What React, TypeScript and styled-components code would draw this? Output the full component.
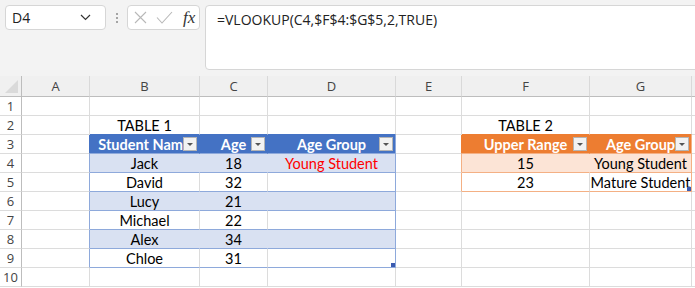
import styled, { createGlobalStyle } from 'styled-components'

const GlobalStyle = createGlobalStyle`
  html, body {
    margin: 0;
    padding: 0;
    background: #ffffff;
  }
  body {
    width: 695px;
    height: 288px;
    overflow: hidden;
    font-family: "Open Sans", "Noto Sans", sans-serif;
  }
`

const COLS = [22, 68, 110, 68, 128, 66, 128, 102, 10]
const LETTERS = ['', 'A', 'B', 'C', 'D', 'E', 'F', 'G', '']
const GRID = '#dcdcdc'
const BLUE = '#4472c4'
const BLUE_LINE = '#8ea9db'
const BLUE_BAND = '#d9e1f2'
const ORANGE = '#ed7d31'
const ORANGE_LINE = '#f4b084'
const ORANGE_BAND = '#fce4d6'

const Toolbar = styled.div`
  height: 76px;
  background: #f3f3f3;
  display: flex;
  align-items: flex-start;
  padding: 5px 0 0 5px;
  box-sizing: border-box;
  overflow: hidden;
  & > * {
    flex-shrink: 0;
  }
`

const NameBox = styled.div`
  width: 101px;
  height: 25px;
  box-sizing: border-box;
  background: #fff;
  border: 1px solid #d6d6d6;
  border-radius: 4px;
  display: flex;
  align-items: center;
  justify-content: space-between;
  padding: 0 14px 0 6px;
  font-size: 14px;
  color: #222;
`

const Dots = styled.div`
  width: 21px;
  height: 25px;
  display: flex;
  flex-direction: column;
  align-items: center;
  justify-content: center;
  gap: 2px;
  span {
    width: 2px;
    height: 2px;
    background: #8a8a8a;
    border-radius: 1px;
  }
`

const FxBox = styled.div`
  width: 73px;
  height: 25px;
  box-sizing: border-box;
  background: #fff;
  border: 1px solid #d6d6d6;
  border-radius: 4px;
  display: flex;
  align-items: center;
  padding: 0 0 0 6px;
  gap: 9px;
`

const Fx = styled.span`
  font-family: "Liberation Serif", serif;
  font-style: italic;
  font-size: 17px;
  color: #333;
  margin-left: 1px;
`

const FormulaBox = styled.div`
  margin-left: 5px;
  width: 520px;
  height: 65px;
  box-sizing: border-box;
  background: #fff;
  border: 1px solid #d6d6d6;
  border-radius: 4px;
  padding: 4px 0 0 11px;
  font-size: 14px;
  color: #222;
`

const Row = styled.div`
  display: flex;
  height: 19px;
`

const HeadRow = styled(Row)`
  height: 21px;
  background: #f0f0f0;
`

const ColHead = styled.div<{ $w: number; $corner?: boolean }>`
  width: ${({ $w }) => $w}px;
  flex-shrink: 0;
  box-sizing: border-box;
  border-bottom: 1px solid #bdbdbd;
  border-right: 1px solid ${({ $corner }) => ($corner ? '#bdbdbd' : '#d9d9d9')};
  display: flex;
  align-items: center;
  justify-content: center;
  font-size: 13px;
  color: #444;
  position: relative;
`

const Corner = styled.div`
  position: absolute;
  right: 3px;
  bottom: 3px;
  width: 0;
  height: 0;
  border-left: 13px solid transparent;
  border-bottom: 13px solid #dadada;
`

const RowHead = styled.div`
  width: 22px;
  flex-shrink: 0;
  box-sizing: border-box;
  border-right: 1px solid #bdbdbd;
  border-bottom: 1px solid ${GRID};
  display: flex;
  align-items: center;
  justify-content: center;
  font-size: 13px;
  color: #444;
  background: #fff;
`

const Cell = styled.div<{
  $w: number
  $bg?: string
  $rc?: string
  $bc?: string
  $color?: string
  $bold?: boolean
}>`
  width: ${({ $w }) => $w}px;
  flex-shrink: 0;
  box-sizing: border-box;
  background: ${({ $bg }) => $bg || '#fff'};
  border-right: 1px solid ${({ $rc }) => $rc || GRID};
  border-bottom: 1px solid ${({ $bc }) => $bc || GRID};
  display: flex;
  align-items: center;
  justify-content: center;
  overflow: hidden;
  white-space: nowrap;
  position: relative;
  font-family: Lato, "Open Sans", sans-serif;
  font-size: 14.5px;
  font-weight: ${({ $bold }) => ($bold ? 700 : 400)};
  color: ${({ $color }) => $color || '#000'};
`

const FilterBtn = styled.div`
  position: absolute;
  right: 2px;
  top: 2px;
  width: 14px;
  height: 14px;
  box-sizing: border-box;
  background: #f2f2f2;
  border: 1px solid #b4b4b4;
  display: flex;
  align-items: center;
  justify-content: center;
  &::after {
    content: '';
    border-left: 3px solid transparent;
    border-right: 3px solid transparent;
    border-top: 3px solid #555;
  }
`

const Handle = styled.div`
  position: absolute;
  right: 0;
  bottom: 0;
  width: 4px;
  height: 4px;
  background: #3b5bb0;
`

type CellSpec = {
  text?: string
  bg?: string
  rc?: string
  bc?: string
  color?: string
  bold?: boolean
  filter?: boolean
  handle?: boolean
}

const students = [
  ['Jack', '18', 'Young Student'],
  ['David', '32', ''],
  ['Lucy', '21', ''],
  ['Michael', '22', ''],
  ['Alex', '34', ''],
  ['Chloe', '31', ''],
]

const ranges = [
  ['15', 'Young Student'],
  ['23', 'Mature Student'],
]

function buildRows(): CellSpec[][] {
  const rows: CellSpec[][] = []
  for (let r = 1; r <= 10; r++) {
    const cells: CellSpec[] = COLS.slice(1).map(() => ({}))
    // indexes: 0 A, 1 B, 2 C, 3 D, 4 E, 5 F, 6 G, 7 H
    if (r === 2) {
      cells[1].text = 'TABLE 1'
      cells[5].text = 'TABLE 2'
      ;[1, 2, 3].forEach((i) => (cells[i].bc = BLUE))
      ;[5, 6].forEach((i) => (cells[i].bc = ORANGE))
    }
    if (r === 3) {
      ;['Student Name', 'Age', 'Age Group'].forEach((t, k) => {
        cells[k + 1] = { text: t, bg: BLUE, rc: BLUE, bc: BLUE_LINE, color: '#fff', bold: true, filter: true }
      })
      cells[3].rc = BLUE_LINE
      cells[0].rc = BLUE
      ;['Upper Range', 'Age Group'].forEach((t, k) => {
        cells[k + 5] = { text: t, bg: ORANGE, rc: ORANGE, bc: ORANGE_LINE, color: '#fff', bold: true, filter: true }
      })
      cells[6].rc = ORANGE_LINE
      cells[4].rc = ORANGE
    }
    if (r >= 4 && r <= 9) {
      const d = students[r - 4]
      const band = r % 2 === 0
      cells[0].rc = BLUE_LINE
      d.forEach((t, k) => {
        cells[k + 1] = {
          text: t,
          bg: band ? BLUE_BAND : '#fff',
          rc: k === 2 ? BLUE_LINE : band ? BLUE_BAND : GRID,
          bc: BLUE_LINE,
          color: k === 2 && t ? '#ff0000' : '#000',
        }
      })
      if (r === 9) cells[3].handle = true
    }
    if (r === 4 || r === 5) {
      const d = ranges[r - 4]
      const band = r === 4
      cells[4].rc = ORANGE_LINE
      d.forEach((t, k) => {
        cells[k + 5] = {
          text: t,
          bg: band ? ORANGE_BAND : '#fff',
          rc: k === 1 ? ORANGE_LINE : band ? ORANGE_BAND : GRID,
          bc: ORANGE_LINE,
        }
      })
      if (r === 5) cells[6].handle = true
    }
    rows.push(cells)
  }
  return rows
}

function Chevron() {
  return (
    <svg width="11" height="7" viewBox="0 0 11 7" fill="none">
      <path d="M1 1l4.5 4.5L10 1" stroke="#333" strokeWidth="1.2" />
    </svg>
  )
}

function Cross() {
  return (
    <svg width="13" height="13" viewBox="0 0 13 13" fill="none">
      <path d="M1 1l11 11M12 1L1 12" stroke="#b8b8b8" strokeWidth="1.1" />
    </svg>
  )
}

function Check() {
  return (
    <svg width="17" height="13" viewBox="0 0 17 13" fill="none">
      <path d="M1 6.5l5 5.5L16 1" stroke="#b8b8b8" strokeWidth="1.1" />
    </svg>
  )
}

function App() {
  const rows = buildRows()
  return (
    <>
      <GlobalStyle />
      <Toolbar>
        <NameBox>
          <span>D4</span>
          <Chevron />
        </NameBox>
        <Dots>
          <span />
          <span />
          <span />
        </Dots>
        <FxBox>
          <Cross />
          <Check />
          <Fx>fx</Fx>
        </FxBox>
        <FormulaBox>=VLOOKUP(C4,$F$4:$G$5,2,TRUE)</FormulaBox>
      </Toolbar>
      <HeadRow>
        {COLS.map((w, i) => (
          <ColHead key={i} $w={w} $corner={i === 0}>
            {i === 0 ? <Corner /> : LETTERS[i]}
          </ColHead>
        ))}
      </HeadRow>
      {rows.map((cells, r) => (
        <Row key={r}>
          <RowHead>{r + 1}</RowHead>
          {cells.map((c, i) => (
            <Cell
              key={i}
              $w={COLS[i + 1]}
              $bg={c.bg}
              $rc={c.rc}
              $bc={c.bc}
              $color={c.color}
              $bold={c.bold}
            >
              {c.text}
              {c.filter && <FilterBtn />}
              {c.handle && <Handle />}
            </Cell>
          ))}
        </Row>
      ))}
    </>
  )
}

export default App
